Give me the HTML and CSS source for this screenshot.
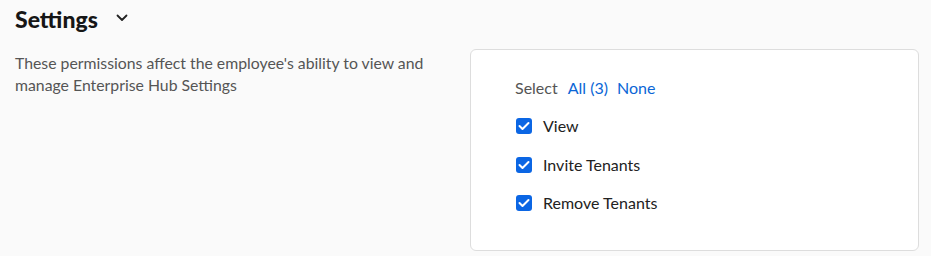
FILE: index.html
```html
<!DOCTYPE html>
<html>
<head>
<meta charset="utf-8">
<link rel="stylesheet" href="styles.css">
</head>
<body>
<div class="page">
  <div class="header">
    <h2 class="title">Settings</h2>
    <svg class="chev" width="12" height="8" viewBox="0 0 12 8"><path d="M1.5 1.5 L6 6 L10.5 1.5" fill="none" stroke="#222" stroke-width="1.8" stroke-linecap="round" stroke-linejoin="round"/></svg>
  </div>
  <div class="content">
    <p class="desc">These permissions affect the employee's ability to view and manage Enterprise Hub Settings</p>
    <div class="card">
      <div class="select-row">
        <span class="select-label">Select</span>
        <a class="link">All (3)</a>
        <a class="link">None</a>
      </div>
      <ul class="list">
        <li class="item"><span class="box"><svg width="12" height="10" viewBox="0 0 12 10"><path d="M1.5 5 L4.5 8 L10.5 2" fill="none" stroke="#fff" stroke-width="2" stroke-linecap="round" stroke-linejoin="round"/></svg></span>View</li>
        <li class="item"><span class="box"><svg width="12" height="10" viewBox="0 0 12 10"><path d="M1.5 5 L4.5 8 L10.5 2" fill="none" stroke="#fff" stroke-width="2" stroke-linecap="round" stroke-linejoin="round"/></svg></span>Invite Tenants</li>
        <li class="item"><span class="box"><svg width="12" height="10" viewBox="0 0 12 10"><path d="M1.5 5 L4.5 8 L10.5 2" fill="none" stroke="#fff" stroke-width="2" stroke-linecap="round" stroke-linejoin="round"/></svg></span>Remove Tenants</li>
      </ul>
    </div>
  </div>
</div>
</body>
</html>
```
FILE: styles.css
```css
html, body { margin: 0; padding: 0; background: #fafafa; }
body { font-family: "Lato", "Open Sans", sans-serif; color: #222; }
.page { padding: 5px 12px 0 15px; }
.header { display: flex; align-items: center; height: 28px; }
.title { margin: 0; font-family: "Lato", sans-serif; font-weight: 900; font-size: 23px; color: #161616; }
.chev { margin-left: 18px; margin-top: -2px; }
.content { display: flex; gap: 24px; margin-top: 16px; }
.desc { flex: 1 1 auto; margin: 3px 0 0 0; font-size: 15.8px; line-height: 22px; color: #555; }
.card { flex: 0 0 449px; box-sizing: border-box; height: 202px; background: #fff; border: 1px solid #ddd; border-radius: 6px; padding: 28px 0 0 44px; }
.select-row { display: flex; gap: 9px; font-size: 16px; line-height: 20px; }
.select-label { color: #555; margin-right: 1px; }
.link { color: #0b66d6; text-decoration: none; }
.list { list-style: none; margin: 20px 0 0 1px; padding: 0; display: flex; flex-direction: column; gap: 22.5px; }
.item { display: flex; align-items: center; font-size: 16px; line-height: 16px; color: #222; }
.box { width: 16px; height: 16px; border-radius: 3px; background: #0b66e4; display: flex; align-items: center; justify-content: center; margin-right: 11px; }
```
